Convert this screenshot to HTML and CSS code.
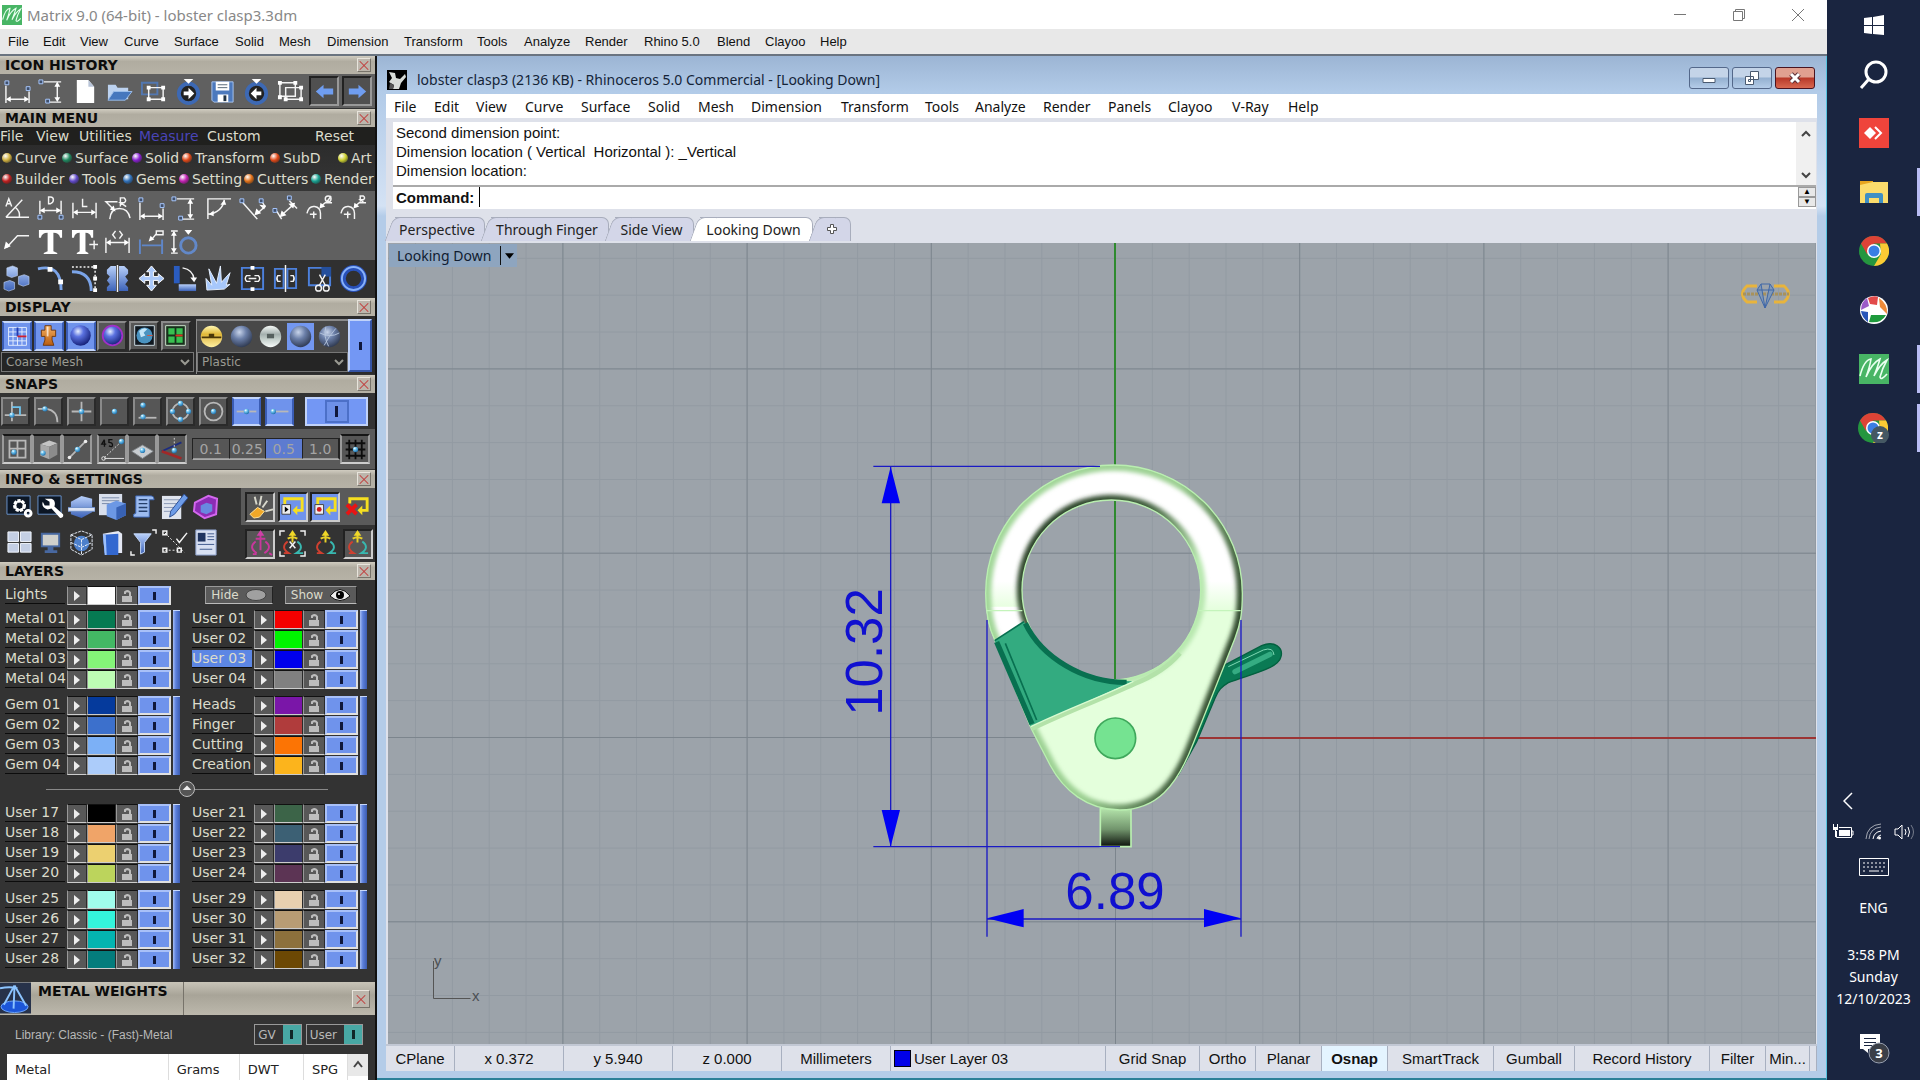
FILE: index.html
```html
<!DOCTYPE html>
<html lang="en">

<head>
  <meta charset="UTF-8">
  <meta name="viewport" content="width=device-width, initial-scale=1.0">
  <title>Matrix 9.0 (64-bit) - lobster clasp3.3dm</title>
  <link rel="stylesheet" href="styles.css">
</head>

<body>
  <!-- icon sprite -->
  <svg class="sprite" aria-hidden="true">
    <defs>
      <radialGradient id="ball" cx=".38" cy=".3" r=".75"><stop offset="0" stop-color="#e8f0ff"/><stop offset=".35" stop-color="#5b72e0"/><stop offset="1" stop-color="#101a70"/></radialGradient>
      <radialGradient id="steel" cx=".4" cy=".3" r=".8"><stop offset="0" stop-color="#c8d4ea"/><stop offset=".4" stop-color="#6b7fa8"/><stop offset="1" stop-color="#232c40"/></radialGradient>
      <linearGradient id="gold" x2="0" y2="1"><stop offset="0" stop-color="#fff6b0"/><stop offset=".4" stop-color="#e0b838"/><stop offset=".6" stop-color="#e8c860"/><stop offset="1" stop-color="#fff0a0"/></linearGradient>
      <linearGradient id="chrome-ball" x2="0" y2="1"><stop offset="0" stop-color="#f4f8f6"/><stop offset=".4" stop-color="#a4b0ae"/><stop offset=".6" stop-color="#c0ccc8"/><stop offset="1" stop-color="#f8fcfa"/></linearGradient>
      <linearGradient id="blue" x2="0" y2="1"><stop offset="0" stop-color="#b8d0fa"/><stop offset="1" stop-color="#3c62b8"/></linearGradient>
      <linearGradient id="amber" x2="0" y2="1"><stop offset="0" stop-color="#f6b060"/><stop offset="1" stop-color="#b85c10"/></linearGradient>
      <radialGradient id="dot" cx=".35" cy=".3" r=".7"><stop offset="0" stop-color="#fff"/><stop offset=".4" stop-color="#6fc4ee"/><stop offset="1" stop-color="#2474b0"/></radialGradient>
    </defs>
    <symbol id="i-m" viewBox="0 0 30 30"><path fill="#48b565" d="M0 0h30v30H0z"/><path fill="none" stroke="#e9fff0" stroke-width="1.6" d="M1 22Q5 6 12 5Q11 12 7 23Q13 9 21 5Q19 12 15 22Q21 10 28 6Q23 15 21 23Q22 27 28 20"/></symbol>
    <symbol id="i-hdim" viewBox="0 0 28 28"><g class="ln"><path d="M2 8v18M26 14v12M4 22h20"/></g><path class="wf" d="M2 22l5-3v6zM26 22l-5-3v6z"/><path class="hd" d="M1 3h4v4H1zM23 9h4v4h-4z"/></symbol>
    <symbol id="i-vdim" viewBox="0 0 28 28"><g class="ln"><path d="M6 4h18M12 25h12M20 5v18"/></g><path class="wf" d="M20 4l-3 5h6zM20 25l-3-5h6z"/><path class="hd" d="M1 2h4v4H1zM8 22h4v4H8z"/></symbol>
    <symbol id="i-file" viewBox="0 0 28 28"><path class="wf" d="M5 2h12l6 7v17H5z"/><path fill="#b8c4d8" d="M17 2v7h6z"/></symbol>
    <symbol id="i-folder" viewBox="0 0 28 28"><path fill="#bcd2f0" d="M2 7h8l2 3h11v12H2z"/><path fill="#4677bd" stroke="#9bbce8" d="M2 23l6-9h19l-7 9z"/></symbol>
    <symbol id="i-group" viewBox="0 0 28 28"><path fill="none" stroke="#5277b0" stroke-width="2" d="M2 5h16v12H2z"/><path class="ln" d="M9 10h15v12H9z"/><path class="wf" d="M7 8h4v4H7zM22 8h4v4h-4zM7 20h4v4H7zM22 20h4v4h-4z"/></symbol>
    <symbol id="i-ring-r" viewBox="0 0 28 28"><circle cx="14" cy="16" r="10" fill="#222" stroke="#3d69b4" stroke-width="4"/><path class="wf" d="M9 1h10l-5 5zM9 14h5v-4l6 6-6 6v-4H9z"/></symbol>
    <symbol id="i-ring-l" viewBox="0 0 28 28"><circle cx="14" cy="16" r="10" fill="#222" stroke="#3d69b4" stroke-width="4"/><path class="wf" d="M9 1h10l-5 5zM19 14h-5v-4l-6 6 6 6v-4h5z"/></symbol>
    <symbol id="i-save" viewBox="0 0 28 28"><path fill="#4c79bd" stroke="#a8c4ee" d="M3 4h22v21H5l-2-2z"/><path class="wf" d="M7 4h14v9H7zM9 17h11v8H9z"/><path stroke="#567" d="M9 7h10M9 10h10"/><path fill="#234" d="M15 18h3v6h-3z"/></symbol>
    <symbol id="i-ungroup" viewBox="0 0 28 28"><path class="ln" d="M3 5h16v14H3zM9 10h16v12H9z"/><path class="wf" d="M1 3h4v4H1zM17 3h4v4h-4zM1 18h4v4H1zM7 20h4v4H7zM23 20h4v4h-4zM23 8h4v4h-4z"/></symbol>
    <symbol id="i-left" viewBox="0 0 28 28"><path fill="#6f9df0" d="M5 14l8-7v4h10v6H13v4z"/></symbol>
    <symbol id="i-right" viewBox="0 0 28 28"><path fill="#6f9df0" d="M23 14l-8-7v4H5v6h10v4z"/></symbol>
    <symbol id="i-angle" viewBox="0 0 28 28"><path class="ln" d="M3 23L20 5M3 23h24M13 13Q18 17 17 23M3 12l3-8 3 8M4 9h4"/></symbol>
    <symbol id="i-dimd" viewBox="0 0 28 28"><path class="ln" d="M3 6v14M25 6v14M4 16h20M12 2v7h2q3-1 3-4t-3-3z"/><path class="wf" d="M3 16l5-3v6zM25 16l-5-3v6z"/><path class="hd" d="M1 21h4v4H1zM23 21h4v4h-4z"/></symbol>
    <symbol id="i-diml" viewBox="0 0 28 28"><path class="ln" d="M2 8v16M26 8v16M4 18h20M12 4v8h5"/><path class="wf" d="M2 18l5-3v6zM26 18l-5-3v6z"/></symbol>
    <symbol id="i-rad" viewBox="0 0 28 28"><path class="ln" d="M14 7H2l8 8M6 25q1-11 10-11t11 10M17 12V3h4q3 3 0 5h-4l6 4"/><path class="wf" d="M12 17l-6-2 4-4z"/></symbol>
    <symbol id="i-arc" viewBox="0 0 28 28"><path class="ln" d="M3 25V4h24M3 20Q18 18 20 5"/><path class="wf" d="M4 20l5-4v6zM20 5l-4 5h6z"/></symbol>
    <symbol id="i-al1" viewBox="0 0 28 28"><path class="ln" d="M4 8l15 17M24 7l3 5-9 8"/><path class="wf" d="M16 21l2-7 5 5zM28 11l-7-1 5 5z"/><path class="hd" d="M1 4h4v4H1zM21 4h4v4h-4z"/></symbol>
    <symbol id="i-al2" viewBox="0 0 28 28"><path class="ln" d="M5 17l5 8M18 6l8 8M11 20L21 11"/><path class="wf" d="M8 23l2-7 5 5zM24 8l-7 1 5 5z"/><path class="hd" d="M1 14h4v4H1zM16 1h4v4h-4z"/></symbol>
    <symbol id="i-dia" viewBox="0 0 28 28"><path class="ln" d="M1 19q2-8 8-7t6 7v6M15 12l5-4h7M4 20h7M8 17v7M21 8l5-7M20 4a3 3 0 1 0 6 0a3 3 0 1 0-6 0"/><path class="wf" d="M14 14l1-6 5 4z"/></symbol>
    <symbol id="i-rplus" viewBox="0 0 28 28"><path class="ln" d="M1 19q2-8 8-7t6 7v6M15 12l5-4h7M4 20h7M8 17v7M21 7V1h3q3 2 0 4h-3l4 3"/><path class="wf" d="M14 14l1-6 5 4z"/></symbol>
    <symbol id="i-leader" viewBox="0 0 28 28"><path class="ln" d="M4 19L15 7h12"/><path class="wf" d="M1 21l2-8 5 5z"/></symbol>
    <symbol id="i-t" viewBox="0 0 28 28"><path class="wf" d="M2 1h24v8h-2q-1-5-7-5v19l4 2v1H7v-1l4-2V4q-6 0-7 5H2z"/></symbol>
    <symbol id="i-tp" viewBox="0 0 28 28"><path class="wf" d="M1 1h22v8h-2q-1-5-6-5v19l3 2v1H6v-1l3-2V4Q4 4 3 9H1z"/><path class="ln" d="M19 16h9M24 12v9"/></symbol>
    <symbol id="i-dimc" viewBox="0 0 28 28"><path class="ln" d="M2 9v16M26 9v16M4 14h20M12 2L9 6l3 4M16 2l3 4-3 4"/><path class="wf" d="M2 14l5-3v6zM26 14l-5-3v6z"/></symbol>
    <symbol id="i-dimt" viewBox="0 0 28 28"><path fill="none" stroke="#5f86c8" stroke-width="2" d="M2 11v15M25 11v15M4 17h20"/><path class="ln" d="M19 2h7v4h-7zM19 5l-5 6"/><path class="wf" d="M11 13l2-6 4 4z"/></symbol>
    <symbol id="i-ringdim" viewBox="0 0 28 28"><circle cx="18" cy="17" r="8" fill="none" stroke="#6288c8" stroke-width="3"/><path class="ln" d="M0 2h7M0 25h7M3 3v21"/><path class="wf" d="M14 1h8l-4 5zM3 2L0 7h6zM3 25l-3-5h6z"/></symbol>
    <symbol id="i-cubes" viewBox="0 0 28 28"><g fill="url(#blue)" stroke="#c8d8f6" stroke-width=".6"><path d="M4 3l6-2 5 2v8l-6 2-5-2zM16 12l6-2 5 2v8l-6 2-5-2zM1 18l6-2 5 2v7l-6 2-5-2z"/></g></symbol>
    <symbol id="i-curve" viewBox="0 0 28 28"><path fill="none" stroke="#7ba4e8" stroke-width="3" d="M1 4q24-6 24 22"/><path class="wf" d="M11 2h5v5h-5zM22 15h5v5h-5z"/></symbol>
    <symbol id="i-offset" viewBox="0 0 28 28"><path fill="none" stroke="#7ba4e8" stroke-width="3" d="M1 7q20 0 20 20"/><path class="ln" stroke-dasharray="2 2" d="M1 2h24v24"/><path class="wf" d="M23 0h4v4h-4zM23 12h4v4h-4zM23 24h4v4h-4z"/></symbol>
    <symbol id="i-mirror" viewBox="0 0 28 28"><path fill="url(#blue)" d="M12.500 1v26H3v-4l3-3-3-4 3-4-3-3V5l4-4zM15.500 1v26H25v-4l-3-3 3-4-3-4 3-3V5l-4-4z"/><path class="ln" d="M14 0v28"/></symbol>
    <symbol id="i-move" viewBox="0 0 28 28"><path fill="#a9c8fa" stroke="#fff" d="M14 1l5 6h-3v5h5V9l6 5-6 5v-3h-5v5h3l-5 6-5-6h3v-5H7v3l-6-5 6-5v3h5V7H9z"/></symbol>
    <symbol id="i-rotate" viewBox="0 0 28 28"><path fill="#2a5cc0" d="M3 1h6v18H3z"/><path fill="url(#blue)" d="M8 20h18v7H8z"/><path class="ln" d="M12 3q11 2 12 12"/><path class="wf" d="M24 18l-4-5h7z"/></symbol>
    <symbol id="i-burst" viewBox="0 0 28 28"><path fill="#a7c8fb" stroke="#e6f0ff" d="M2 26L1 14l6 7-3-17 8 15 4-18 1 17 9-10-4 13 4-1-6 5z"/></symbol>
    <symbol id="i-link" viewBox="0 0 28 28"><path fill="none" stroke="#4c80dc" stroke-width="2" d="M3 3h22v22H3z"/><path class="ln" d="M12 11H8q-3 3 0 6h4M16 11h4q3 3 0 6h-4M10 14h8"/><path class="wf" d="M12 1h4v4h-4zM12 23h4v4h-4z"/></symbol>
    <symbol id="i-unlink" viewBox="0 0 28 28"><path fill="none" stroke="#4c80dc" stroke-width="2" d="M3 4h9v20H3zM16 4h9v20h-9z"/><path class="ln" d="M9 11H6q-2 3 0 6h3M19 11h3q2 3 0 6h-3M14 0v28"/></symbol>
    <symbol id="i-cut" viewBox="0 0 28 28"><path fill="none" stroke="#4c80dc" stroke-width="2" d="M3 3h22v18H3z"/><path fill="#244f9c" d="M16 2h10v10H16z"/><path class="ln" d="M14 10l6 11M20 10l-6 11"/><circle class="ln" cx="13" cy="24" r="3"/><circle class="ln" cx="21" cy="24" r="3"/></symbol>
    <symbol id="i-ring" viewBox="0 0 28 28"><circle cx="14" cy="14" r="11" fill="none" stroke="#2850b8" stroke-width="6"/><circle cx="14" cy="14" r="12" fill="none" stroke="#88b2fa" stroke-width="2"/></symbol>
    <symbol id="i-grid" viewBox="0 0 28 28"><path stroke="#e8f0ff" fill="none" d="M4 5h20v20H4zM9 5v20M14 5v20M19 5v20M4 10h20M4 15h20M4 20h20"/><path stroke="#233bb0" fill="none" stroke-width="2" d="M14 5v10"/><path stroke="#d02030" stroke-width="2" d="M14 15h10"/></symbol>
    <symbol id="i-man" viewBox="0 0 28 28"><path fill="url(#amber)" stroke="#6c3408" d="M10 3h7v5h5v7h-4v4l2 6H8l2-6v-4H6V8h4z"/><path fill="#fff" opacity=".7" d="M12 4h2v11h-2z"/></symbol>
    <symbol id="i-ball" viewBox="0 0 28 28"><circle cx="14" cy="14" r="11.500" fill="url(#ball)"/></symbol>
    <symbol id="i-ballp" viewBox="0 0 28 28"><circle cx="14" cy="14" r="11" fill="url(#ball)" stroke="#a030c8" stroke-width="2"/></symbol>
    <symbol id="i-globe" viewBox="0 0 28 28"><path fill="#101820" stroke="#d8e8f0" d="M3 3h22v22H3z"/><circle cx="14" cy="14" r="9" fill="#4a93c0"/><path fill="#c4e6f8" d="M8 9q5-5 9-2l-4 4 2 3-5 2z"/><path stroke="#e05030" d="M17 14h6"/></symbol>
    <symbol id="i-views" viewBox="0 0 28 28"><path fill="#18301c" stroke="#d8f0d8" d="M3 3h22v22H3z"/><path fill="#38c050" d="M6 6h7v7H6zM15 6h7v7h-7zM6 15h7v7H6zM15 15h7v7h-7z"/><path stroke="#e03020" stroke-width="2" d="M14 14h8"/></symbol>
    <symbol id="i-gold" viewBox="0 0 28 28"><circle cx="14" cy="14" r="12" fill="url(#gold)"/><path fill="#4a3708" d="M3 14h8v-3h6v3h8v2H3z"/></symbol>
    <symbol id="i-steel" viewBox="0 0 28 28"><circle cx="14" cy="14" r="12" fill="url(#steel)"/></symbol>
    <symbol id="i-silver" viewBox="0 0 28 28"><circle cx="14" cy="14" r="12" fill="url(#chrome-ball)"/><path fill="#55605e" d="M10 11h8v5h-8z"/></symbol>
    <symbol id="i-wire" viewBox="0 0 28 28"><circle cx="14" cy="14" r="12" fill="url(#steel)"/><path fill="none" stroke="#b8c8e0" d="M3 10q12 6 22 0M10 3q-3 11 3 22M21 5q-8 9-13 19"/></symbol>
    <symbol id="i-s1" viewBox="0 0 28 28"><path class="gl" d="M10 3v22M2 18h24"/><path fill="none" stroke="#6fc4ee" stroke-width="2" d="M10 9h9v9"/><circle cx="10" cy="18" r="3" fill="url(#dot)"/></symbol>
    <symbol id="i-s2" viewBox="0 0 28 28"><path class="gl" d="M2 11h10q12 2 12 15"/><circle cx="10" cy="11" r="3" fill="url(#dot)"/></symbol>
    <symbol id="i-s3" viewBox="0 0 28 28"><path class="gl" d="M14 3v22M3 14h22"/><circle cx="14" cy="14" r="3" fill="url(#dot)"/></symbol>
    <symbol id="i-s4" viewBox="0 0 28 28"><circle cx="14" cy="14" r="3" fill="url(#dot)"/></symbol>
    <symbol id="i-s5" viewBox="0 0 28 28"><path class="gl" d="M4 21h20"/><circle cx="9" cy="7" r="3" fill="url(#dot)"/><circle cx="9" cy="20" r="3" fill="url(#dot)"/></symbol>
    <symbol id="i-s6" viewBox="0 0 28 28"><circle class="gl" cx="14" cy="14" r="9"/><g fill="url(#dot)"><circle cx="14" cy="5" r="3"/><circle cx="5" cy="14" r="3"/><circle cx="23" cy="14" r="3"/><circle cx="14" cy="23" r="3"/></g></symbol>
    <symbol id="i-s7" viewBox="0 0 28 28"><circle class="gl" cx="14" cy="14" r="10"/><circle cx="14" cy="14" r="3" fill="url(#dot)"/></symbol>
    <symbol id="i-s8" viewBox="0 0 28 28"><path class="gl" d="M3 14h22"/><circle cx="14" cy="14" r="3" fill="url(#dot)"/></symbol>
    <symbol id="i-s9" viewBox="0 0 28 28"><path class="gl" d="M8 14h16"/><circle cx="7" cy="14" r="3" fill="url(#dot)"/></symbol>
    <symbol id="i-p1" viewBox="0 0 28 28"><path class="gl" d="M5 4h18v19H5zM14 4v19M5 13h18"/><circle cx="10" cy="17" r="3" fill="url(#dot)"/></symbol>
    <symbol id="i-p2" viewBox="0 0 28 28"><path fill="#c4c4c4" d="M6 8l10-4 9 3-9 4z"/><path fill="#8c8c8c" d="M16 11l9-4v13l-9 5z"/><path fill="#a8a8a8" d="M6 8l10 3v14L6 21z"/><circle cx="9" cy="18" r="3" fill="url(#dot)"/></symbol>
    <symbol id="i-p3" viewBox="0 0 28 28"><path class="gl" d="M5 23L23 5"/><circle cx="5" cy="23" r="2" fill="#eee"/><circle cx="23" cy="5" r="2" fill="#eee"/><circle cx="14" cy="14" r="3" fill="url(#dot)"/></symbol>
    <symbol id="i-p4" viewBox="0 0 28 28"><path stroke="#eee" stroke-dasharray="2 2" d="M5 23L23 6"/><path stroke="#eee" d="M5 24h22"/><path fill="none" stroke="#111" stroke-width="1.500" d="M5 3L2 8h5M5 4v7M14 3h-4v3q4 0 4 3t-4 1"/><circle cx="4" cy="24" r="2" fill="none" stroke="#eee"/><circle cx="24" cy="5" r="3" fill="url(#dot)"/></symbol>
    <symbol id="i-p5" viewBox="0 0 28 28"><path fill="#c8ccd0" stroke="#808488" d="M2 16l12-7 12 7-12 8z"/><circle cx="14" cy="15" r="3" fill="url(#dot)"/></symbol>
    <symbol id="i-p6" viewBox="0 0 28 28"><path stroke="#1c2c80" stroke-width="2" d="M2 16L24 6"/><path stroke="#a02828" stroke-width="3" d="M2 16l22 8"/><path stroke="#ddd" stroke-dasharray="2 2" d="M16 1v14"/><circle cx="16" cy="15" r="3" fill="url(#dot)"/></symbol>
    <symbol id="i-hash" viewBox="0 0 28 28"><path stroke="#0c0c0c" stroke-width="2" d="M7 3v22M14 3v22M21 3v22M3 7h22M3 14h22M3 21h22"/><circle cx="14" cy="14" r="3" fill="url(#dot)"/></symbol>
    <symbol id="i-gears" viewBox="0 0 28 28"><path fill="#0c1624" stroke="#6a94cc" d="M1 3h24v19H1z"/><circle cx="14" cy="13" r="5" fill="none" stroke="#fff" stroke-width="3.5" stroke-dasharray="3 1.200"/><circle cx="14" cy="13" r="4.500" fill="none" stroke="#fff" stroke-width="2"/><circle cx="23" cy="21" r="3" fill="none" stroke="#fff" stroke-width="3"/></symbol>
    <symbol id="i-wrench" viewBox="0 0 28 28"><path fill="#0c1624" stroke="#6a94cc" d="M1 3h24v19H1z"/><path fill="#fff" d="M8 6l5 3v4H8L6 9q-2 6 5 8l4-1 9 10q4 0 3-4l-9-8q2-6-3-8z"/></symbol>
    <symbol id="i-slab" viewBox="0 0 28 28"><path fill="url(#blue)" d="M3 9l11-6 11 3v14l-11 6-11-4z"/><path fill="#dce4f4" stroke="#6c8cc8" d="M0 15h28v4H0z"/></symbol>
    <symbol id="i-boxdoc" viewBox="0 0 28 28"><path fill="#d8dfec" d="M0 1h24v22H0z"/><path stroke="#7788a8" d="M3 5h18M3 8h18M3 11h8"/><path fill="#6c98e4" d="M8 12l10-4 10 3v12l-10 5-10-4z"/><path fill="#3862b4" d="M18 15l10-4v12l-10 5z"/></symbol>
    <symbol id="i-scroll" viewBox="0 0 28 28"><path fill="#9dbcf0" stroke="#3c66b4" d="M6 3h16q3 0 3 4h-5v18H4q-2-3 2-4z"/><path stroke="#26406c" stroke-width="1.500" d="M9 7h9M9 11h9M9 15h9M9 19h9"/></symbol>
    <symbol id="i-note" viewBox="0 0 28 28"><path fill="#dfe4ee" d="M1 3h20v24H1z"/><path stroke="#8896b4" d="M3 7h16M3 11h16M3 15h12M3 19h9"/><path fill="#6d9ce8" stroke="#2c4e94" d="M24 1l4 4-14 17-5 3 1-6z"/></symbol>
    <symbol id="i-gem" viewBox="0 0 28 28"><path fill="#8c2cb4" stroke="#d468ee" stroke-width="2" d="M3 10l14-7 9 3-1 16-12 4-11-7z"/><path fill="#6888e0" d="M9 13l6-3 6 2v7l-6 3-6-2z"/></symbol>
    <symbol id="i-four" viewBox="0 0 28 28"><path fill="#c4cfe4" stroke="#f4f8ff" d="M2 3h11v10H2zM15 3h11v10H15zM2 15h11v9H2zM15 15h11v9H15z"/></symbol>
    <symbol id="i-monitor" viewBox="0 0 28 28"><path fill="#4868a0" d="M4 4h20v15H4zM11 19h6v3h4v3H8v-3h3z"/><path fill="#d0d0cc" d="M6 6h16v11H6z"/></symbol>
    <symbol id="i-mesh" viewBox="0 0 28 28"><circle cx="14" cy="15" r="8" fill="#4d80cc"/><path fill="none" stroke="#e8eef8" stroke-dasharray="3 1" d="M3 6l11-4 11 4v15l-11 6-11-6zM3 6l11 5 11-5M14 11v16M3 14l11 5 11-5"/></symbol>
    <symbol id="i-book" viewBox="0 0 28 28"><path fill="#e4e8f4" d="M4 5l16-3 4 3v20H6z"/><path fill="#3368d0" d="M4 6l16-1v22H6z"/><path fill="#9cc0fc" d="M4 6h3l1 21H6z"/></symbol>
    <symbol id="i-funnel" viewBox="0 0 28 28"><path fill="url(#blue)" stroke="#c4d8fa" d="M4 5h18l-7 9v10l-4 2V14z"/><path class="ln" d="M23 1h4v4M1 23v4h4"/></symbol>
    <symbol id="i-check" viewBox="0 0 28 28"><path stroke="#eee" stroke-dasharray="2 2" d="M4 4l20 20M4 22h20"/><path class="ln" d="M2 2h4v4H2zM2 20h4v4H2zM17 20h4v4h-4zM16 10l3 4 8-10"/></symbol>
    <symbol id="i-card" viewBox="0 0 28 28"><path fill="#d8e0f2" stroke="#8ca0cc" d="M4 1h21v26H4z"/><path fill="#203460" d="M6 4h8v9H6z"/><path stroke="#40588c" d="M16 5h7M16 8h7M16 11h7M6 16h17M8 21h13"/></symbol>
    <symbol id="i-spark" viewBox="0 0 28 28"><path stroke="#d8d8cc" stroke-width="2" d="M10 12L8 4M13 13l2-10M16 15l5-7M19 19l8-2"/><path fill="#f0a828" stroke="#ffe49c" d="M3 22l8-7 7 4-5 6-6 1z"/></symbol>
    <symbol id="i-play" viewBox="0 0 28 28"><path fill="none" stroke="#f6df20" stroke-width="3" d="M6 12V6h18v12h-7"/><path fill="#f6df20" d="M19 13v10l-5-5z"/><path fill="#eee" stroke="#444" d="M3 12h9v10H3z"/><path d="M6 14l4 3-4 3z"/></symbol>
    <symbol id="i-rec" viewBox="0 0 28 28"><path fill="none" stroke="#f6df20" stroke-width="3" d="M6 12V6h18v12h-7"/><path fill="#f6df20" d="M19 13v10l-5-5z"/><path fill="#eee" stroke="#444" d="M3 12h9v10H3z"/><circle cx="7.500" cy="17" r="2.500" fill="#d01818"/></symbol>
    <symbol id="i-del" viewBox="0 0 28 28"><path fill="none" stroke="#f6df20" stroke-width="3" d="M6 11V6h18v12h-7"/><path fill="#f6df20" d="M19 13v10l-5-5z"/><path stroke="#e81414" stroke-width="4" d="M3 12l10 10M13 12L3 22"/></symbol>
    <symbol id="i-g1" viewBox="0 0 28 28"><g fill="none" stroke="#c8389c" stroke-width="2"><path d="M14 4v17M9 9h10M9 12q-8 6 1 12M19 12q8 6-1 12M6 25h4M23 24l3 2"/></g><path fill="#d040a8" d="M14 0l-4 6h8z"/></symbol>
    <symbol id="i-g2" viewBox="0 0 28 28"><g fill="none" stroke-width="2"><path stroke="#e8d028" d="M14 4v9M9 9q5-3 10 0"/><path stroke="#d04030" d="M9 12q-8 6 1 12H5"/><path stroke="#38b8b0" d="M19 12q8 6-1 12h7"/></g><path fill="#f0d828" d="M14 0l-4 6h8z"/></symbol>
    <symbol id="i-corners" viewBox="0 0 28 28"><use href="#i-g2"/><path class="ln" d="M1 6V1h5M22 1h5v5M1 22v5h5M27 22v5h-5M11 12l6 7M17 12l-6 7"/></symbol>
    <symbol id="i-lock" viewBox="0 0 12 14"><path fill="#bdbdbd" d="M1 7h10v6H1z"/><path fill="none" stroke="#bdbdbd" stroke-width="2" d="M9 7V3.500Q7 1 4 3v2"/></symbol>
    <symbol id="i-chromelogo" viewBox="0 0 30 30"><circle cx="15" cy="15" r="15" fill="#25963f"/><path fill="#dd4336" d="M2 7.500a15 15 0 0 1 26 0H15L8 18z"/><path fill="#fccb34" d="M28 7.500A15 15 0 0 1 15 30l7-12-1-10.500z"/><circle cx="15" cy="15" r="7" fill="#fff"/><circle cx="15" cy="15" r="5.500" fill="#3a7ee4"/></symbol>
  </svg>

  <main class="desktop">
    <header class="app-title">
      <svg class="app-logo"><use href="#i-m"/></svg>
      <span>Matrix 9.0 (64-bit) - lobster clasp3.3dm</span>
      <div class="app-controls">
        <button aria-label="Minimize"><svg viewBox="0 0 14 14"><path d="M1 6.500h12"/></svg></button>
        <button aria-label="Restore"><svg viewBox="0 0 14 14"><path d="M1.500 3.500h9v9h-9zM3.500 3V1.500h9v9H11"/></svg></button>
        <button aria-label="Close"><svg viewBox="0 0 14 14"><path d="M1 1l12 12M13 1L1 13"/></svg></button>
      </div>
    </header>
    <nav class="app-menu">
      <a href="#">File</a><a href="#">Edit</a><a href="#">View</a><a href="#">Curve</a><a href="#">Surface</a><a href="#">Solid</a><a href="#">Mesh</a><a href="#">Dimension</a><a href="#">Transform</a><a href="#">Tools</a><a href="#">Analyze</a><a href="#">Render</a><a href="#">Rhino 5.0</a><a href="#">Blend</a><a href="#">Clayoo</a><a href="#">Help</a>
    </nav>

    <div class="workspace">
      <aside class="panel">
        <h2 class="bar">ICON HISTORY<button class="close" aria-label="Close"></button></h2>
        <div class="tools history">
          <button><svg><use href="#i-hdim"/></svg></button>
          <button><svg><use href="#i-vdim"/></svg></button>
          <button><svg><use href="#i-file"/></svg></button>
          <button><svg><use href="#i-folder"/></svg></button>
          <button><svg><use href="#i-group"/></svg></button>
          <button><svg><use href="#i-ring-r"/></svg></button>
          <button><svg><use href="#i-save"/></svg></button>
          <button><svg><use href="#i-ring-l"/></svg></button>
          <button><svg><use href="#i-ungroup"/></svg></button>
          <button class="boxed"><svg><use href="#i-left"/></svg></button>
          <button class="boxed"><svg><use href="#i-right"/></svg></button>
        </div>

        <h2 class="bar">MAIN MENU<button class="close" aria-label="Close"></button></h2>
        <nav class="main-menu">
          <a href="#">File</a><a href="#">View</a><a href="#">Utilities</a><a href="#" class="current">Measure</a><a href="#">Custom</a><a href="#">Reset</a>
        </nav>
        <div class="categories">
          <div class="cat-row cat-first">
            <a href="#" class="c-yellow">Curve</a><a href="#" class="c-green">Surface</a><a href="#" class="c-purple">Solid</a><a href="#" class="c-orange">Transform</a><a href="#" class="c-orange">SubD</a><a href="#" class="c-lime">Art</a>
          </div>
          <div class="cat-row cat-second">
            <a href="#" class="c-red">Builder</a><a href="#" class="c-violet">Tools</a><a href="#" class="c-blue">Gems</a><a href="#" class="c-magenta">Setting</a><a href="#" class="c-amber">Cutters</a><a href="#" class="c-teal">Render</a>
          </div>
        </div>
        <div class="tools measure">
          <button><svg><use href="#i-angle"/></svg></button>
          <button><svg><use href="#i-dimd"/></svg></button>
          <button><svg><use href="#i-diml"/></svg></button>
          <button><svg><use href="#i-rad"/></svg></button>
          <button><svg><use href="#i-hdim"/></svg></button>
          <button><svg><use href="#i-vdim"/></svg></button>
          <button><svg><use href="#i-arc"/></svg></button>
          <button><svg><use href="#i-al1"/></svg></button>
          <button><svg><use href="#i-al2"/></svg></button>
          <button><svg><use href="#i-dia"/></svg></button>
          <button><svg><use href="#i-rplus"/></svg></button>
          <button><svg><use href="#i-leader"/></svg></button>
          <button><svg><use href="#i-t"/></svg></button>
          <button><svg><use href="#i-tp"/></svg></button>
          <button><svg><use href="#i-dimc"/></svg></button>
          <button><svg><use href="#i-dimt"/></svg></button>
          <button><svg><use href="#i-ringdim"/></svg></button>
        </div>
        <div class="tools dark">
          <button><svg><use href="#i-cubes"/></svg></button>
          <button><svg><use href="#i-curve"/></svg></button>
          <button><svg><use href="#i-offset"/></svg></button>
          <button><svg><use href="#i-mirror"/></svg></button>
          <button><svg><use href="#i-move"/></svg></button>
          <button><svg><use href="#i-rotate"/></svg></button>
          <button><svg><use href="#i-burst"/></svg></button>
          <button><svg><use href="#i-link"/></svg></button>
          <button><svg><use href="#i-unlink"/></svg></button>
          <button><svg><use href="#i-cut"/></svg></button>
          <button><svg><use href="#i-ring"/></svg></button>
        </div>

        <h2 class="bar">DISPLAY<button class="close" aria-label="Close"></button></h2>
        <div class="display">
          <div class="display-modes">
            <div class="btn-row">
              <button class="key on"><svg><use href="#i-grid"/></svg></button>
              <button class="key on"><svg><use href="#i-man"/></svg></button>
              <button class="key on"><svg><use href="#i-ball"/></svg></button>
              <button class="key"><svg><use href="#i-ballp"/></svg></button>
              <button class="key"><svg><use href="#i-globe"/></svg></button>
              <button class="key"><svg><use href="#i-views"/></svg></button>
            </div>
            <select aria-label="Mesh"><option>Coarse Mesh</option></select>
          </div>
          <div class="display-mats">
            <div class="btn-row">
              <button class="mat"><svg><use href="#i-gold"/></svg></button>
              <button class="mat"><svg><use href="#i-steel"/></svg></button>
              <button class="mat"><svg><use href="#i-silver"/></svg></button>
              <button class="mat lit"><svg><use href="#i-steel"/></svg></button>
              <button class="mat"><svg><use href="#i-wire"/></svg></button>
            </div>
            <select aria-label="Material"><option>Plastic</option></select>
          </div>
          <button class="toggle tall" aria-label="Toggle display"></button>
        </div>

        <h2 class="bar">SNAPS<button class="close" aria-label="Close"></button></h2>
        <div class="snaps">
          <button class="key"><svg><use href="#i-s1"/></svg></button>
          <button class="key"><svg><use href="#i-s2"/></svg></button>
          <button class="key"><svg><use href="#i-s3"/></svg></button>
          <button class="key"><svg><use href="#i-s4"/></svg></button>
          <button class="key"><svg><use href="#i-s5"/></svg></button>
          <button class="key"><svg><use href="#i-s6"/></svg></button>
          <button class="key"><svg><use href="#i-s7"/></svg></button>
          <button class="key on"><svg><use href="#i-s8"/></svg></button>
          <button class="key on"><svg><use href="#i-s9"/></svg></button>
          <button class="toggle wide" aria-label="Toggle snaps"></button>
        </div>
        <div class="planes">
          <div class="btn-group">
            <button class="key"><svg><use href="#i-p1"/></svg></button>
            <button class="key"><svg><use href="#i-p2"/></svg></button>
            <button class="key"><svg><use href="#i-p3"/></svg></button>
          </div>
          <div class="btn-group">
            <button class="key"><svg><use href="#i-p4"/></svg></button>
            <button class="key"><svg><use href="#i-p5"/></svg></button>
            <button class="key"><svg><use href="#i-p6"/></svg></button>
          </div>
          <div class="steps">
            <button>0.1</button><button>0.25</button><button class="on">0.5</button><button>1.0</button>
          </div>
          <button class="key"><svg><use href="#i-hash"/></svg></button>
        </div>

        <h2 class="bar">INFO &amp; SETTINGS<button class="close" aria-label="Close"></button></h2>
        <div class="info">
          <div class="info-left">
            <button><svg><use href="#i-gears"/></svg></button>
            <button><svg><use href="#i-wrench"/></svg></button>
            <button><svg><use href="#i-slab"/></svg></button>
            <button><svg><use href="#i-boxdoc"/></svg></button>
            <button><svg><use href="#i-scroll"/></svg></button>
            <button><svg><use href="#i-note"/></svg></button>
            <button><svg><use href="#i-gem"/></svg></button>
            <button><svg><use href="#i-four"/></svg></button>
            <button><svg><use href="#i-monitor"/></svg></button>
            <button><svg><use href="#i-mesh"/></svg></button>
            <button><svg><use href="#i-book"/></svg></button>
            <button><svg><use href="#i-funnel"/></svg></button>
            <button><svg><use href="#i-check"/></svg></button>
            <button><svg><use href="#i-card"/></svg></button>
          </div>
          <div class="info-right">
            <div class="info-row light">
              <button class="key"><svg><use href="#i-spark"/></svg></button>
              <button class="key on"><svg><use href="#i-play"/></svg></button>
              <button class="key on"><svg><use href="#i-rec"/></svg></button>
              <button><svg><use href="#i-del"/></svg></button>
            </div>
            <div class="info-row">
              <button class="key"><svg><use href="#i-g1"/></svg></button>
              <button><svg><use href="#i-corners"/></svg></button>
              <button><svg><use href="#i-g2"/></svg></button>
              <button class="key"><svg><use href="#i-g2"/></svg></button>
            </div>
          </div>
        </div>

        <h2 class="bar">LAYERS<button class="close" aria-label="Close"></button></h2>
        <div class="layers">
          <div class="lights">
            <div id="lights"></div>
            <div class="visibility">
              <button>Hide <svg viewBox="0 0 22 14"><ellipse cx="11" cy="7" rx="10" ry="5.500" fill="#a0a0a0" stroke="#444"/></svg></button>
              <button>Show <svg viewBox="0 0 22 14"><path fill="#eee" stroke="#111" d="M1 8q10-13 20 0q-10 9-20 0z"/><circle cx="11" cy="7" r="4"/><circle cx="10" cy="6" r="1" fill="#fff"/></svg></button>
            </div>
          </div>
          <div class="layer-sets" id="sets-main"></div>
          <div class="fold"><button aria-label="Collapse"><svg viewBox="0 0 16 16"><path fill="#eee" d="M8 4l5 5H3z"/></svg></button></div>
          <div class="layer-sets" id="sets-user"></div>
        </div>

        <div class="weights-bar">
          <svg class="weights-icon" viewBox="0 0 32 32"><path fill="#27324a" d="M0 0h32v32H0z"/><ellipse cx="15" cy="25" rx="14" ry="6" fill="#1c56d8" stroke="#6fa8ff"/><path fill="none" stroke="#8cc4ff" stroke-width="2" d="M15 3L4 23M15 3l12 21M15 3l-1 24M0 6q10-2 18 0"/></svg>
          <h2>METAL WEIGHTS</h2>
          <button class="close" aria-label="Close"></button>
        </div>
        <div class="library">
          <span>Library: Classic - (Fast)-Metal</span>
          <button>GV<i></i></button>
          <button>User<i></i></button>
        </div>
        <div class="weights">
          <table>
            <thead><tr><th>Metal</th><th>Grams</th><th>DWT</th><th>SPG</th></tr></thead>
          </table>
          <button aria-label="Scroll up"><svg viewBox="0 0 12 12"><path fill="none" stroke="#444" stroke-width="2" d="M2 8l4-5 4 5"/></svg></button>
        </div>
      </aside>

      <section class="rhino">
        <header class="rhino-title">
          <svg class="rhino-logo" viewBox="0 0 20 20"><path d="M0 0h20v20H0z"/><path fill="#d8dcd8" d="M2 2l6 1 1 5 4 1 5-5 1 3-5 6-2 6H6l1-4-5-3 3-4z"/><path fill="#555" d="M3 13l4 2-1 4H2z"/></svg>
          <span>lobster clasp3 (2136 KB) - Rhinoceros 5.0 Commercial - [Looking Down]</span>
          <div class="rhino-controls">
            <button aria-label="Minimize"><svg viewBox="0 0 16 16"><path fill="#fff" stroke="#4a5a70" d="M2 8.500h12v4H2z"/></svg></button>
            <button aria-label="Restore"><svg viewBox="0 0 16 16"><path fill="#fff" stroke="#4a5a70" d="M6.500 1.500h8v8h-8zM1.500 6.500h8v8h-8zM4.500 9.500h2v2h-2z"/></svg></button>
            <button class="red" aria-label="Close"><svg viewBox="0 0 16 16"><path stroke="#5c3038" stroke-width="5" d="M4 4l8 8M12 4l-8 8"/><path stroke="#fff" stroke-width="3" d="M4 4l8 8M12 4l-8 8"/></svg></button>
          </div>
        </header>
        <div class="rhino-body">
          <nav class="rhino-menu">
            <a href="#">File</a><a href="#">Edit</a><a href="#">View</a><a href="#">Curve</a><a href="#">Surface</a><a href="#">Solid</a><a href="#">Mesh</a><a href="#">Dimension</a><a href="#">Transform</a><a href="#">Tools</a><a href="#">Analyze</a><a href="#">Render</a><a href="#">Panels</a><a href="#">Clayoo</a><a href="#">V-Ray</a><a href="#">Help</a>
          </nav>
          <div class="history-log">
            <div class="log-text">
              <p>Second dimension point:</p>
              <p>Dimension location ( Vertical&nbsp; Horizontal ): _Vertical</p>
              <p>Dimension location:</p>
            </div>
            <div class="log-scroll">
              <svg viewBox="0 0 10 8"><path d="M1 6l4-4 4 4"/></svg>
              <svg viewBox="0 0 10 8"><path d="M1 2l4 4 4-4"/></svg>
            </div>
          </div>
          <div class="command">
            <label for="command">Command:</label><span class="caret"></span>
            <input id="command" type="text">
            <div class="spin"><button aria-label="Up">▲</button><button aria-label="Down">▼</button></div>
          </div>
          <div class="tabs">
            <button class="tab">Perspective</button>
            <button class="tab">Through Finger</button>
            <button class="tab">Side View</button>
            <button class="tab active">Looking Down</button>
            <button class="tab add" aria-label="New viewport"><svg viewBox="0 0 12 12"><path fill="#fff" stroke="#555" d="M4.500 1.500h3v3h3v3h-3v3h-3v-3h-3v-3h3z"/></svg></button>
          </div>
          <div class="viewport">
            <button class="view-name"><span>Looking Down</span><svg viewBox="0 0 8 5"><path d="M0 0h8L4 5z"/></svg></button>
            <svg class="scene" viewBox="387 243 1430 801" preserveAspectRatio="xMidYMid slice">
              <defs>
                <pattern id="minor" x="1115" y="737" width="36.840" height="36.860" patternUnits="userSpaceOnUse"><path stroke="#929aa2" fill="none" d="M.5 0v37M0 .5h37"/></pattern>
                <pattern id="major" x="1115" y="737" width="184.200" height="184.300" patternUnits="userSpaceOnUse"><path stroke="#7c858d" fill="none" d="M.5 0v185M0 .5h185"/></pattern>
                <linearGradient id="edge" x1="0" y1=".2" x2="1" y2=".6"><stop offset="0" stop-color="#a4d89b"/><stop offset=".6" stop-color="#9ccf92"/><stop offset="1" stop-color="#1f331d"/></linearGradient>
                <linearGradient id="inner" x1="0" y1="0" x2=".9" y2=".8"><stop offset="0" stop-color="#1f331d"/><stop offset=".45" stop-color="#43603f"/><stop offset=".8" stop-color="#b9e8b0"/></linearGradient>
                <linearGradient id="white" x2="0" y2="1"><stop offset="0" stop-color="#fff"/><stop offset=".8" stop-color="#fff"/><stop offset="1" stop-color="#e4ffdc"/></linearGradient>
                <linearGradient id="stem" x2="0" y2="1"><stop offset="0" stop-color="#b4e4ab"/><stop offset=".55" stop-color="#71946c"/><stop offset="1" stop-color="#0c120b"/></linearGradient>
                <filter id="soft"><feGaussianBlur stdDeviation="6"/></filter>
                <path id="outline" d="M497 460A385 385 0 0 1 1267 460C1267 520 1262 550 1245 595L1120 910C1070 1040 1010 1108 900 1110C800 1110 730 1050 690 975C670 935 645 890 632 862L524 600C505 560 497 520 497 460Z"/>
                <clipPath id="body"><path clip-rule="evenodd" d="M497 460A385 385 0 0 1 1267 460C1267 520 1262 550 1245 595L1120 910C1070 1040 1010 1108 900 1110C800 1110 730 1050 690 975C670 935 645 890 632 862L524 600C505 560 497 520 497 460ZM606 450A268 270 0 1 0 1142 450A268 270 0 1 0 606 450Z"/></clipPath>
              </defs>
              <path fill="url(#minor)" d="M387 243h1430v801H387z"/>
              <path fill="url(#major)" d="M387 243h1430v801H387z"/>
              <path stroke="#2f8a2f" stroke-width="2" d="M1115 243v494"/>
              <path stroke="#9c3434" stroke-width="2" d="M1115 738h702"/>
              <path fill="none" stroke="#555" d="M433.500 961v37.500h37"/>
              <text x="434" y="966" class="axis">y</text>
              <text x="472" y="1001" class="axis">x</text>
              <g fill="none"><path stroke="#e8b43c" stroke-width="3" d="M1757 286h-10q-9 8 0 16h10M1774 286h10q9 8 0 16h-10"/><path stroke="#a8925c" stroke-width="3" stroke-dasharray="3 1" d="M1743 294h46"/><path fill="#7f98b8" stroke="#4068a8" d="M1757 290l4-6h9l4 6-9 18zM1757 290h17M1761 284l4 24 5-24"/></g>
              <!-- clasp and its dimensions -->
              <g transform="translate(820 440) scale(.33333)">
                <path fill="#0a7a54" stroke="#04603f" stroke-width="4" d="M1205 680L1325 617C1365 600 1390 625 1383 650C1376 685 1300 700 1225 728C1205 740 1195 750 1185 775L1130 905L1075 1005L1060 980Z"/>
                <path fill="none" stroke="#35ac82" stroke-width="16" stroke-linecap="round" d="M1245 695L1350 643"/>
                <path fill="none" stroke="#7fd8b4" stroke-width="3" d="M1225 680L1330 630Q1360 620 1362 645"/>
                <path fill="url(#stem)" stroke="#baf0b0" stroke-width="5" d="M841 1105h92v115h-92z"/>
                <g clip-path="url(#body)">
                  <use href="#outline" fill="#e4ffdc"/>
                  <path fill="url(#white)" d="M490 70h780v442H490z"/>
                  <path fill="#fff" d="M490 500h130v110H490z"/>
                  <g filter="url(#soft)">
                    <use href="#outline" fill="none" stroke="url(#edge)" stroke-width="34"/>
                    <ellipse cx="874" cy="450" rx="268" ry="270" fill="none" stroke="url(#inner)" stroke-width="32"/>
                  </g>
                </g>
                <use href="#outline" fill="none" stroke="#b9eeb0" stroke-width="4"/>
                <ellipse cx="874" cy="450" rx="268" ry="270" fill="none" stroke="#b9eeb0" stroke-width="4"/>
                <path stroke="#c4f4bb" stroke-width="4" d="M499 512h108M1138 512h124"/>
                <path fill="#33ab80" d="M524 602L612 545C665 650 790 722 940 724L632 860Z"/>
                <path fill="none" stroke="#087050" stroke-width="16" d="M616 550C665 652 790 728 920 727M530 606L636 852"/>
                <path fill="none" stroke="#087050" stroke-width="5" d="M524 602L612 545M556 610L650 840"/>
                <path fill="none" stroke="#b3e2a9" stroke-width="14" d="M636 866C740 815 850 775 945 731Q1030 698 1080 640"/>
                <path fill="none" stroke="#d8fbd0" stroke-width="4" d="M632 860C740 808 850 768 940 724"/>
                <circle cx="886" cy="895" r="61" fill="#75e391" stroke="#3fa85c" stroke-width="5"/>
                <g stroke="#1a1ac4" stroke-width="4" fill="none">
                  <path d="M160 79h680M160 1220h740M212 80v1140M501 540v950M1263 540v950M501 1437h762"/>
                </g>
                <path fill="#0000f4" d="M212 80l28 110h-55zM212 1220l28-110h-55zM501 1435l110-28v55zM1263 1435l-111-28v55z"/>
              </g>
              <text class="dim" x="1115" y="909">6.89</text>
              <text class="dim" transform="translate(882 652) rotate(-90)">10.32</text>
            </svg>
          </div>
          <footer class="status">
            <span class="w-cplane">CPlane</span><span class="w-coord">x 0.372</span><span class="w-coord">y 5.940</span><span class="w-coord">z 0.000</span><span class="w-coord">Millimeters</span><span class="layer"><i></i>User Layer 03</span><button class="w-grid">Grid Snap</button><button class="w-ortho">Ortho</button><button class="w-planar">Planar</button><button class="w-planar on">Osnap</button><button class="w-smart">SmartTrack</button><button class="w-gumball">Gumball</button><button class="w-record">Record History</button><button class="w-ortho">Filter</button><span class="w-min">Min...</span><span class="w-end"></span>
          </footer>
        </div>
      </section>
    </div>
  </main>

  <aside class="taskbar">
    <button class="start" aria-label="Start"><svg width="20" height="20" viewBox="0 0 20 20"><path fill="#fff" d="M0 3l8-1v8H0zM9 2l11-2v10H9zM0 11h8v8l-8-1zM9 11h11v9L9 19z"/></svg></button>
    <button class="start" aria-label="Search"><svg width="30" height="30" viewBox="0 0 30 30"><circle cx="17" cy="12" r="10" fill="none" stroke="#fff" stroke-width="3"/><path stroke="#fff" stroke-width="3" d="M10 19l-8 9"/></svg></button>
    <button class="app" aria-label="AnyDesk"><svg width="30" height="30" viewBox="0 0 30 30"><path fill="#ef443b" d="M0 0h30v30H0z"/><path fill="#fff" d="M5 15l6-6 6 6-6 6z"/><path fill="none" stroke="#fff" stroke-width="2" d="M16 9l6 6-6 6"/></svg></button>
    <button class="app open" aria-label="Explorer"><svg width="30" height="30" viewBox="0 0 30 30"><path fill="#e7a51e" d="M1 4h13v5H1z"/><path fill="#fbdc6c" d="M1 8l13-3h15v21H1z"/><path fill="#3f8fc4" d="M6 26V18q0-2 2-2h14q2 0 2 2v8h-4v-5H10v5z"/></svg></button>
    <button class="app" aria-label="Chrome"><svg width="30" height="30"><use href="#i-chromelogo"/></svg></button>
    <button class="app" aria-label="Picasa"><svg width="30" height="30" viewBox="0 0 30 30"><circle cx="15" cy="15" r="14" fill="#fff"/><path fill="#e24a4a" d="M9 3q6-3 10-1l-1 8-7-1z"/><path fill="#ee8a38" d="M20 3q9 6 8 16l-7-7z"/><path fill="#1e9a3c" d="M27 20q-5 9-17 7l2-7z"/><path fill="#2a56b8" d="M9 27Q3 23 2 16l7 1z"/><path fill="#9c5cc8" d="M2 15Q2 7 8 3l2 8z"/></svg></button>
    <button class="app open" aria-label="Matrix"><svg width="30" height="30"><use href="#i-m"/></svg></button>
    <button class="app open" aria-label="Chrome profile Z"><svg width="32" height="30" viewBox="0 0 32 30"><use href="#i-chromelogo" width="30" height="30"/><circle cx="22" cy="22" r="9" fill="#455863"/><text x="22" y="26" class="badge-z">z</text></svg></button>
    <div class="tray">
      <button class="more" aria-label="Show hidden icons"><svg width="10" height="18" viewBox="0 0 10 18"><path fill="none" stroke="#fff" stroke-width="1.500" d="M9 1L1 9l8 8"/></svg></button>
      <div class="tray-icons">
        <svg width="22" height="16" viewBox="0 0 22 16"><path fill="none" stroke="#fff" d="M4.500 7v6.500h15v-10H7M20 7h1v4h-1"/><path fill="#fff" d="M7 6h11v6H7zM1 3h5v3H1zM1 0h1v3H1zM5 0h1v3H5zM3 6h1v7H3z"/></svg>
        <svg width="18" height="18" viewBox="0 0 18 18"><g fill="none" stroke="#fff"><path d="M12 16q0-3 4-4M8 16q1-7 8-8"/><path opacity=".6" d="M4 16Q5 5 16 4M1 16Q2 2 16 1"/></g><circle cx="14.500" cy="15" r="1.500" fill="#fff"/></svg>
        <svg width="22" height="16" viewBox="0 0 22 16"><g fill="none" stroke="#fff"><path d="M1 5h3l4-4v14l-4-4H1zM11 5q2 3 0 6M14 3q3 5 0 10"/><path opacity=".4" d="M17 1q5 7 0 14"/></g></svg>
      </div>
      <svg class="keyboard" width="30" height="18" viewBox="0 0 30 18"><path fill="none" stroke="#fff" d="M.5.500h29v17H.5z"/><path stroke="#fff" stroke-dasharray="2 2" d="M4 5h22M4 9h22M4 13h4M22 13h4"/><path stroke="#fff" d="M10 13h10"/></svg>
      <span class="lang">ENG</span>
      <time>3:58 PM<br>Sunday<br>12/10/2023</time>
      <button class="notes" aria-label="Notifications"><svg width="32" height="32" viewBox="0 0 32 32"><path fill="#fff" d="M2 2h20v15H10v4l-5-4H2z"/><path stroke="#1a2540" d="M6 6.500h12M6 10.500h12M6 13.500h8"/><circle cx="21" cy="21" r="10" fill="#3b3f48" stroke="#98a0b0"/><text x="21" y="26" class="badge-n">3</text></svg></button>
    </div>
  </aside>

  <script src="script.js"></script>
</body>

</html>
```

FILE: styles.css
```css
* {
  margin: 0;
  padding: 0;
  box-sizing: border-box;
}

body {
  display: flex;
  height: 100vh;
  overflow: hidden;
  background: #1a2540;
  font-family: "Noto Sans", sans-serif;
  font-size: 14px;
  color: #111;
}

a {
  color: inherit;
  text-decoration: none;
}

button {
  display: flex;
  align-items: center;
  justify-content: center;
  border: 0;
  background: none;
  font: inherit;
  color: inherit;
}

svg {
  display: block;
  flex: none;
}

.sprite {
  position: absolute;
  width: 0;
  height: 0;
}

/* stroke helpers shared by the sprite */
.ln {
  fill: none;
  stroke: #f4f4f4;
  stroke-width: 1.5;
}

.wf {
  fill: #fff;
}

.hd {
  fill: #40506c;
  stroke: #a8c8ff;
}

.gl {
  fill: none;
  stroke: #b8b8b8;
  stroke-width: 2;
}

.desktop {
  flex: 1;
  min-width: 0;
  display: flex;
  flex-direction: column;
}

/* outer window */
.app-title {
  display: flex;
  align-items: center;
  height: 29px;
  padding-left: 2px;
  background: #fff;
  color: #888;
}

.app-title span {
  font-size: 15px;
}

.app-logo {
  width: 20px;
  height: 20px;
  margin-right: 5px;
}

.app-controls {
  display: flex;
  margin-left: auto;
}

.app-controls button {
  width: 59px;
  height: 28px;
}

.app-controls svg {
  width: 14px;
  height: 14px;
  fill: none;
  stroke: #777;
}

.app-menu {
  display: grid;
  grid-template-columns: 35px 37px 44px 50px 61px 44px 48px 77px 73px 47px 61px 59px 73px 48px 55px auto;
  align-items: center;
  height: 27px;
  padding-left: 8px;
  background: #e8e8e8;
  border-bottom: 2px solid #6a7480;
  font: 13px "Liberation Sans", sans-serif;
  white-space: nowrap;
}

.workspace {
  flex: 1;
  min-height: 0;
  display: flex;
}

/* left panel */
.panel {
  width: 377px;
  flex: none;
  overflow: hidden;
  background: #333;
  border-right: 2px solid #111;
  color: #dcdccc;
  font: 14px "DejaVu Sans", sans-serif;
}

.bar {
  display: flex;
  align-items: center;
  justify-content: space-between;
  height: 18px;
  margin-top: 1px;
  padding: 0 4px 0 5px;
  background: linear-gradient(#d0ccc0, #b0aca0 30%, #b6b2a6);
  color: #0c0c0c;
  font-size: 14px;
  font-weight: bold;
  line-height: 18px;
}

.bar:first-child {
  margin-top: 0;
}

.close {
  position: relative;
  width: 14px;
  height: 14px;
  background: #bcb6ac;
  border: 1px solid;
  border-color: #e8e4dc #77736a #77736a #e8e4dc;
}

.close::before,
.close::after {
  content: '';
  position: absolute;
  width: 12px;
  height: 1px;
  background: #c23a3a;
  transform: rotate(45deg);
}

.close::after {
  transform: rotate(-45deg);
}

.tools {
  display: grid;
  grid-template-columns: repeat(11, 1fr);
  align-items: center;
  justify-items: center;
  padding-right: 5px;
  background: #606060;
}

.tools svg {
  width: 27px;
  height: 27px;
}

.history {
  grid-template-columns: repeat(9, 1fr) 33px 33px;
  height: 34px;
  padding-right: 1px;
}

.boxed {
  width: 30px;
  height: 30px;
  background: #505050;
  border: 2px solid;
  border-color: #222 #999 #999 #222;
}

.measure {
  height: 69px;
}

.dark {
  height: 37px;
  background: #303030;
}

.main-menu {
  display: grid;
  grid-template-columns: 36px 43px 60px 68px 108px 1fr;
  height: 18px;
  line-height: 18px;
  background: #20201e;
}

.main-menu .current {
  color: #4a45b8;
}

.categories {
  padding: 2px 0 2px 2px;
  background: linear-gradient(#2c2c2c, #363636);
}

.cat-row {
  display: grid;
  height: 21px;
  white-space: nowrap;
}

.cat-first {
  grid-template-columns: 60px 70px 50px 88px 68px 1fr;
}

.cat-second {
  grid-template-columns: 67px 54px 56px 65px 67px 1fr;
}

.cat-row a {
  display: flex;
  align-items: center;
  gap: 3px;
}

.cat-row a::before {
  content: '';
  width: 10px;
  height: 10px;
  flex: none;
  border-radius: 50%;
  background: radial-gradient(circle at 35% 30%, #fff, var(--c) 45%, #222);
}

.c-yellow { --c: #d0b040; }
.c-green { --c: #208860; }
.c-purple { --c: #8820d0; }
.c-orange { --c: #e04818; }
.c-lime { --c: #ccd030; }
.c-red { --c: #c02020; }
.c-violet { --c: #6048c8; }
.c-blue { --c: #3070b8; }
.c-magenta { --c: #c020b0; }
.c-amber { --c: #e07018; }
.c-teal { --c: #18a090; }

/* raised square buttons */
.key {
  width: 30px;
  height: 30px;
  background: #565656;
  border: 2px solid;
  border-color: #8a8a8a #2a2a2a #2a2a2a #8a8a8a;
}

.key svg,
.mat svg {
  width: 25px;
  height: 25px;
}

.key.on {
  background: #6f93ec;
  border-color: #c4d6fa #3a5cb4 #c4d6fa #3a5cb4;
}

.display {
  display: flex;
  height: 58px;
  padding: 3px 3px 0 1px;
  background: #2c2c2c;
}

.display-modes {
  width: 195px;
}

.display-mats {
  flex: 1;
  border-top: 2px solid #8a8a8a;
  border-left: 1px solid #8a8a8a;
}

.btn-row {
  display: flex;
  justify-content: space-between;
  align-items: center;
  height: 33px;
  padding: 0 5px 0 1px;
}

.display-mats .btn-row {
  height: 31px;
  background: #484848;
}

.mat {
  width: 27px;
  height: 27px;
}

.mat.lit {
  background: #7397f0;
}

.display select {
  width: 100%;
  height: 20px;
  background: #252525;
  border: 1px solid #777;
  color: #9a9a92;
  font: 12px "DejaVu Sans", sans-serif;
}

.display .display-modes select {
  width: 193px;
}

.toggle {
  background: #7397f4;
  border: 2px solid;
  border-color: #c0d2fa #3554a4 #3554a4 #c0d2fa;
}

.toggle::after {
  content: '';
  width: 3px;
  height: 8px;
  background: #10183c;
}

.tall {
  width: 24px;
  height: 53px;
}

.snaps,
.planes {
  display: flex;
  align-items: center;
}

.snaps {
  gap: 4px;
  height: 36px;
  padding: 0 7px 0 1px;
  background: #333;
}

.snaps .key {
  width: 29px;
  height: 29px;
}

.wide {
  width: 63px;
  height: 29px;
  margin-left: auto;
  border-color: #c0d2fa;
}

.wide::after {
  width: 20px;
  height: 19px;
  border: 2px solid #4c70c8;
  background: linear-gradient(#10183c, #10183c) center / 3px 11px no-repeat #6d90e8;
}

.planes {
  gap: 5px;
  height: 40px;
  padding: 0 5px 0 2px;
  background: #5a5a5a;
}

.planes .key {
  border-color: #151515 #999 #ccc #999;
}

.btn-group {
  display: flex;
}

.steps {
  display: flex;
  flex: 1;
  height: 22px;
  margin-right: -5px;
  border: 1px solid #222;
  border-bottom-color: #aaa;
}

.steps button {
  flex: 1;
  background: #565656;
  border-right: 1px solid #222;
  border-bottom: 1px solid #999;
  color: #a4a4a4;
}

.steps .on {
  background: #5d7bd0;
}

.info {
  display: flex;
  justify-content: space-between;
  height: 73px;
  background: #333;
}

.info-left {
  display: grid;
  grid-template-columns: repeat(7, 31px);
  align-items: center;
  justify-items: center;
  padding-left: 4px;
}

.info svg {
  width: 27px;
  height: 27px;
}

.info-right {
  width: 134px;
}

.info-row {
  display: flex;
  align-items: center;
  justify-content: space-between;
  height: 37px;
  padding: 0 2px 0 4px;
}

.info-row button {
  width: 30px;
  height: 30px;
}

.info-row.light {
  background: #5a5a5a;
}

.info-row .key {
  border-color: #222 #ccc #ccc #222;
}

/* layer rows */
.layers {
  padding: 6px 7px 0 5px;
  height: 402px;
}

.lights {
  display: flex;
  justify-content: space-between;
  margin-bottom: 4px;
}

#lights {
  width: 166px;
}

.visibility {
  display: flex;
  gap: 12px;
  padding-right: 11px;
}

.visibility button {
  gap: 6px;
  width: 68px;
  height: 18px;
  background: #5a5a5a;
  border: 1px solid;
  border-color: #999 #222 #bbb #999;
  font-size: 12px;
}

.visibility button:last-child {
  width: 72px;
}

.visibility svg {
  width: 22px;
  height: 14px;
}

.layer-sets {
  display: grid;
  grid-template-columns: 175px 175px;
  gap: 6px 12px;
}

.layer-set {
  display: flex;
  justify-content: space-between;
}

.layer-list {
  width: 166px;
}

.layer-row {
  display: flex;
  height: 20px;
}

.layer-row .name {
  width: 60px;
  height: 18px;
  margin-right: 2px;
  border-bottom: 1px solid #0c0c0c;
  line-height: 17px;
  white-space: nowrap;
}

.layer-row .name.selected {
  background: #5c86e4;
}

.layer-row button {
  height: 19px;
  border: 1px solid;
  border-color: #111 #2a2a2a #ccc #999;
  background: #585858;
}

.layer-row .expand {
  width: 20px;
}

.layer-row .swatch {
  width: 29px;
}

.layer-row .lock {
  width: 22px;
}

.layer-row .toggle {
  width: 33px;
  background: #6f93ec;
  border-width: 2px;
  border-color: #a8c0f8 #e0e0e0 #e0e0e0 #a8c0f8;
}

.layer-bar {
  width: 7px;
  height: 79px;
  background: linear-gradient(90deg, #a4bcf4, #5c80dc 40%, #3c5cb0);
  border-top: 1px solid #c8d8fa;
}

.fold {
  display: flex;
  align-items: center;
  justify-content: center;
  height: 24px;
  margin: 1px 0 3px;
  background: linear-gradient(#888, #888) center / 282px 1px no-repeat;
}

.fold button {
  width: 16px;
  height: 16px;
  border-radius: 50%;
  border: 1px solid #bbb;
  background: #555;
}

.fold svg {
  width: 14px;
  height: 14px;
}

.weights-bar {
  display: flex;
  height: 33px;
  background: linear-gradient(#c8c4b8, #a8a498 40%, #bcb8ac);
  color: #0c0c0c;
}

.weights-icon {
  width: 31px;
  height: 32px;
}

.weights-bar h2 {
  width: 153px;
  padding-left: 7px;
  border-right: 1px solid #77736a;
  font-size: 14px;
  line-height: 18px;
}

.weights-bar .close {
  width: 18px;
  height: 18px;
  margin: 8px 5px 0 auto;
}

.library {
  display: flex;
  align-items: center;
  gap: 4px;
  height: 39px;
  padding: 0 12px 0 15px;
  color: #b8b8b8;
  font: 12px "Liberation Sans", sans-serif;
}

.library span {
  margin-right: auto;
}

.library button {
  justify-content: space-between;
  gap: 7px;
  height: 21px;
  padding-left: 3px;
  border: 1px solid #999;
  font: 12px "DejaVu Sans", sans-serif;
}

.library i {
  width: 18px;
  height: 19px;
  background: linear-gradient(#102828, #102828) center / 3px 9px no-repeat #48a8a4;
}

.weights {
  display: flex;
  margin: 0 7px;
  background: #fff;
  color: #222;
}

.weights table {
  flex: 1;
  border-collapse: collapse;
  table-layout: fixed;
}

.weights th {
  width: 64px;
  height: 30px;
  padding-left: 8px;
  border-right: 1px solid #ddd;
  font-size: 13px;
  font-weight: normal;
  text-align: left;
}

.weights th:first-child {
  width: 161px;
}

.weights th:nth-child(2) {
  width: 71px;
}

.weights th:last-child {
  width: 44px;
}

.weights button {
  width: 20px;
  height: 22px;
  background: #e8e8e8;
}

.weights button svg {
  width: 12px;
  height: 12px;
}

/* inner window */
.rhino {
  flex: 1;
  min-width: 0;
  display: flex;
  flex-direction: column;
  padding: 0 9px 7px;
  background: linear-gradient(#9cb5d4, #b2cbe8 36px, #d4e2f4 150px, #b4cce8 160px);
  border-right: 1px solid #58c4e0;
  border-bottom: 2px solid #2c8098;
}

.rhino-title {
  display: flex;
  align-items: center;
  height: 38px;
  padding: 9px 2px 0 1px;
  color: #142438;
}

.rhino-logo {
  width: 20px;
  height: 20px;
  margin-right: 10px;
}

.rhino-controls {
  display: flex;
  gap: 3px;
  margin: 0 0 8px auto;
}

.rhino-controls button {
  width: 40px;
  height: 22px;
  margin-top: 4px;
  background: linear-gradient(#c4d4e8 45%, #94b0d0 50%, #b4cce8);
  border: 1px solid #54688a;
  border-radius: 3px;
}

.rhino-controls .red {
  background: linear-gradient(#e0a090 45%, #b83828 50%, #d86850);
  border-color: #4a1420;
}

.rhino-controls svg {
  width: 16px;
  height: 16px;
}

.rhino-body {
  flex: 1;
  min-height: 0;
  display: flex;
  flex-direction: column;
  background: #dee1ea;
}

.rhino-menu {
  display: grid;
  grid-template-columns: 40px 42px 49px 56px 67px 50px 53px 90px 84px 50px 68px 65px 60px 64px 56px auto;
  align-items: center;
  height: 24px;
  padding-left: 8px;
  background: #fff;
  white-space: nowrap;
}

.history-log {
  display: flex;
  height: 65px;
  margin: 4px 1px 0 7px;
  background: #fff;
  border-bottom: 2px solid #aaa;
  font: 15px "Liberation Sans", sans-serif;
}

.log-text {
  flex: 1;
  padding: 1px 0 0 3px;
  line-height: 19px;
}

.log-scroll {
  display: flex;
  flex-direction: column;
  justify-content: space-between;
  align-items: center;
  width: 20px;
  padding: 8px 0 6px;
  background: #f0f0f0;
}

.log-scroll svg {
  width: 10px;
  height: 8px;
  fill: none;
  stroke: #444;
  stroke-width: 2;
}

.command {
  display: flex;
  align-items: center;
  height: 22px;
  margin: 0 1px 0 7px;
  padding: 0 0 2px 3px;
  background: #fff;
  font: bold 15px "Liberation Sans", sans-serif;
}

.caret {
  width: 1px;
  height: 20px;
  margin-left: 5px;
  background: #000;
}

.command input {
  flex: 1;
  height: 20px;
  border: 0;
  outline: 0;
}

.spin button {
  width: 18px;
  height: 10px;
  background: #e8e8e8;
  border: 1px solid #999;
  font-size: 8px;
  line-height: 8px;
  color: #000;
}

.tabs {
  display: flex;
  align-items: flex-end;
  height: 34px;
  padding: 0 0 2px 3px;
}

.tab {
  position: relative;
  z-index: 0;
  height: 24px;
  width: 96px;
  color: #222;
  white-space: nowrap;
}

.tab::before {
  content: '';
  position: absolute;
  z-index: -1;
  inset: 0 0 0 6px;
  background: #d3d6e8;
  border: 1px solid #a8adbc;
  border-bottom: 0;
  border-left: 0;
  border-radius: 0 7px 0 0;
}

.tab::after {
  content: '';
  position: absolute;
  z-index: -1;
  inset: 0 auto 0 0;
  width: 18px;
  background: #d3d6e8;
  border: 1px solid #a8adbc;
  border-width: 1px 0 0 1px;
  border-radius: 7px 0 0 0;
  transform: skewX(-20deg);
}

.tab:nth-child(2) {
  width: 124px;
}

.tab:nth-child(3) {
  width: 85px;
}

.tab:nth-child(4) {
  width: 119px;
}

.tab.active::before,
.tab.active::after {
  background: #fff;
}

.tab.add {
  width: 38px;
}

.tab.add svg {
  width: 12px;
  height: 12px;
}

.viewport {
  position: relative;
  flex: 1;
  min-height: 0;
  margin: 0 1px 0 2px;
  background: #9ca3aa;
}

.scene {
  width: 100%;
  height: 100%;
}

.view-name {
  position: absolute;
  top: 1px;
  left: 1px;
  gap: 8px;
  height: 23px;
  padding: 0 3px 0 8px;
  background: #8ea5bf;
  color: #101c30;
}

.view-name span {
  padding-right: 9px;
  border-right: 1px solid #111;
}

.view-name svg {
  width: 9px;
  height: 6px;
  margin-left: -4px;
}

.dim {
  fill: #1010d0;
  font: 51px "Liberation Sans", sans-serif;
  text-anchor: middle;
}

.axis {
  fill: #4c5054;
  font: 15px "Liberation Sans", sans-serif;
}

.status {
  display: flex;
  height: 27px;
  border-top: 2px solid #c2c8d4;
  font: 15px "Liberation Sans", sans-serif;
  white-space: nowrap;
}

.status > * {
  display: flex;
  align-items: center;
  justify-content: center;
  flex: none;
  border-right: 1px solid #a8b0c0;
}

.status .layer {
  flex: 1;
  justify-content: flex-start;
  gap: 3px;
  padding-left: 3px;
}

.status i {
  width: 17px;
  height: 17px;
  background: #0000e8;
  border: 1px solid #001;
}

.status .on {
  background: #e4f4ff;
  font-weight: bold;
}

.w-cplane { width: 69px; }
.w-coord { width: 109px; }
.w-grid { width: 94px; }
.w-ortho { width: 56px; }
.w-planar { width: 66px; }
.w-smart { width: 106px; }
.w-gumball { width: 81px; }
.w-record { width: 135px; }
.w-min { width: 44px; }
.w-end { width: 7px; }

/* windows taskbar */
.taskbar {
  display: flex;
  flex-direction: column;
  width: 93px;
  flex: none;
  background: #1a2540;
  color: #fff;
}

.start {
  height: 50px;
}

.start + .app {
  margin-top: 3px;
}

.app {
  height: 59px;
  flex: none;
}

.app.open {
  background: linear-gradient(#b9bdf4, #b9bdf4) right / 3px 48px no-repeat;
}

.badge-z,
.badge-n {
  fill: #fff;
  font: bold 12px "Noto Sans", sans-serif;
  text-anchor: middle;
}

.badge-n {
  font-size: 13px;
}

.tray {
  display: flex;
  flex-direction: column;
  align-items: center;
  margin-top: auto;
  padding-bottom: 16px;
}

.more {
  align-self: flex-start;
  margin-left: 16px;
}

.tray-icons {
  display: flex;
  align-items: center;
  gap: 11px;
  margin: 13px 0 17px;
}

.lang {
  margin: 22px 0 27px;
  line-height: 19px;
}

time {
  line-height: 22px;
  text-align: center;
}

.notes {
  margin-top: 22px;
}
```

FILE: script.js
```js
const mainSets = [
  [['Metal 01', '#067a52'], ['Metal 02', '#43b864'], ['Metal 03', '#84f478'], ['Metal 04', '#bdfcb4']],
  [['User 01', '#f40000'], ['User 02', '#00f400'], ['User 03', '#0000ec'], ['User 04', '#808080']],
  [['Gem 01', '#053a9c'], ['Gem 02', '#3c70cc'], ['Gem 03', '#7cb0f6'], ['Gem 04', '#acccfa']],
  [['Heads', '#7a16a8'], ['Finger', '#b03c3c'], ['Cutting', '#fc7404'], ['Creation', '#fcb41c']]
];

const userSets = [
  [['User 17', '#000000'], ['User 18', '#f0a468'], ['User 19', '#ecd070'], ['User 20', '#bcd45c']],
  [['User 21', '#3c6448'], ['User 22', '#3c6074'], ['User 23', '#3c3c6c'], ['User 24', '#5c3454']],
  [['User 25', '#a0fcec'], ['User 26', '#34f4dc'], ['User 27', '#04b4b0'], ['User 28', '#047c7c']],
  [['User 29', '#e8d0b0'], ['User 30', '#b89c74'], ['User 31', '#8c703c'], ['User 32', '#6c4804']]
];

function layerRow([name, color]) {
  const selected = name === 'User 03' ? ' selected' : '';
  return `<div class="layer-row">
    <span class="name${selected}">${name}</span>
    <button class="expand" aria-label="Expand ${name}"><svg width="6" height="10" viewBox="0 0 6 10"><path fill="#eee" d="M0 0l6 5-6 5z"/></svg></button>
    <button class="swatch" aria-label="${name} color" style="background:${color}"></button>
    <button class="lock" aria-label="Lock ${name}"><svg width="12" height="14"><use href="#i-lock"/></svg></button>
    <button class="toggle" aria-label="Show ${name}"></button>
  </div>`;
}

function renderSets(id, sets) {
  document.getElementById(id).innerHTML = sets.map(set =>
    `<div class="layer-set"><div class="layer-list">${set.map(layerRow).join('')}</div><div class="layer-bar"></div></div>`
  ).join('');
}

document.getElementById('lights').innerHTML = layerRow(['Lights', '#ffffff']);
renderSets('sets-main', mainSets);
renderSets('sets-user', userSets);
```
